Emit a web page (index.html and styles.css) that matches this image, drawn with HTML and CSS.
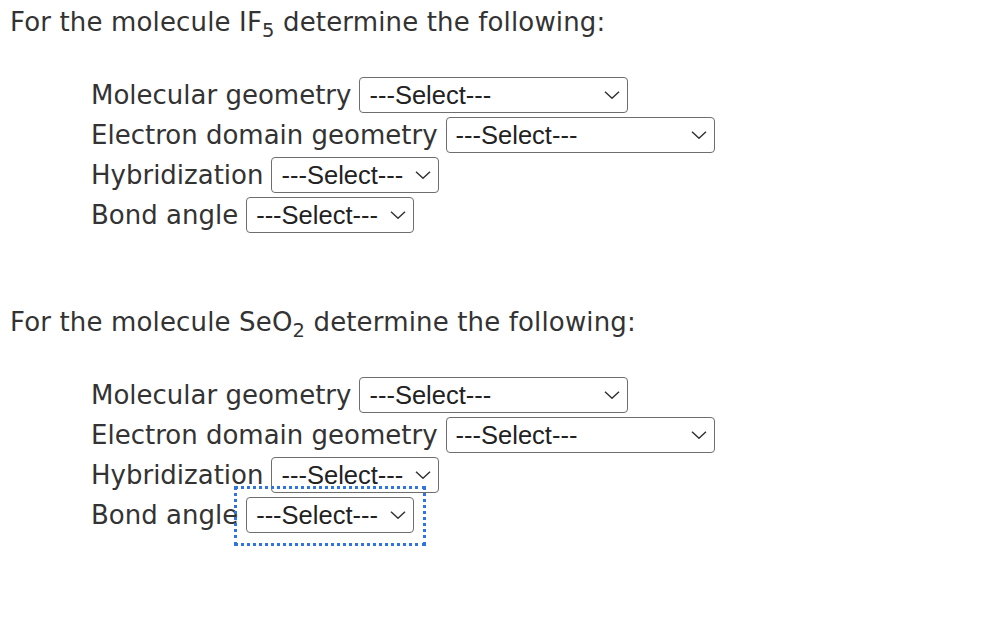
FILE: index.html
```html
<!DOCTYPE html>
<html>
<head>
<meta charset="utf-8">
<link rel="stylesheet" href="styles.css">
</head>
<body>
<section class="block">
  <p class="q">For the molecule IF<sub>5</sub> determine the following:</p>
  <div class="rows">
    <div class="row"><span class="lbl">Molecular geometry</span><span class="sel w-wide"><select><option>---Select---</option></select><svg class="chev" viewBox="0 0 16 8"><path d="M1 0.8 L8 7.2 L15 0.8"/></svg></span></div>
    <div class="row"><span class="lbl">Electron domain geometry</span><span class="sel w-wide"><select><option>---Select---</option></select><svg class="chev" viewBox="0 0 16 8"><path d="M1 0.8 L8 7.2 L15 0.8"/></svg></span></div>
    <div class="row"><span class="lbl">Hybridization</span><span class="sel w-narrow"><select><option>---Select---</option></select><svg class="chev" viewBox="0 0 16 8"><path d="M1 0.8 L8 7.2 L15 0.8"/></svg></span></div>
    <div class="row"><span class="lbl">Bond angle</span><span class="sel w-narrow"><select><option>---Select---</option></select><svg class="chev" viewBox="0 0 16 8"><path d="M1 0.8 L8 7.2 L15 0.8"/></svg></span></div>
  </div>
</section>
<section class="block second">
  <p class="q">For the molecule SeO<sub>2</sub> determine the following:</p>
  <div class="rows">
    <div class="row"><span class="lbl">Molecular geometry</span><span class="sel w-wide"><select><option>---Select---</option></select><svg class="chev" viewBox="0 0 16 8"><path d="M1 0.8 L8 7.2 L15 0.8"/></svg></span></div>
    <div class="row"><span class="lbl">Electron domain geometry</span><span class="sel w-wide"><select><option>---Select---</option></select><svg class="chev" viewBox="0 0 16 8"><path d="M1 0.8 L8 7.2 L15 0.8"/></svg></span></div>
    <div class="row"><span class="lbl">Hybridization</span><span class="sel w-narrow"><select><option>---Select---</option></select><svg class="chev" viewBox="0 0 16 8"><path d="M1 0.8 L8 7.2 L15 0.8"/></svg></span></div>
    <div class="row"><span class="lbl">Bond angle</span><span class="sel w-narrow focus"><select><option>---Select---</option></select><svg class="chev" viewBox="0 0 16 8"><path d="M1 0.8 L8 7.2 L15 0.8"/></svg></span></div>
  </div>
</section>
</body>
</html>
```
FILE: styles.css
```css
html, body {
  margin: 0;
  padding: 0;
  background: #ffffff;
}
body {
  font-family: "DejaVu Sans", Verdana, sans-serif;
  color: #333333;
  font-size: 26px;
}
.block {
  height: 300px;
  padding-left: 10px;
}
.q {
  margin: 0;
  padding-top: 4px;
  height: 36px;
  line-height: 36px;
  letter-spacing: 0.15px;
}
.q sub {
  font-size: 19.5px;
  vertical-align: -6px;
  line-height: 0;
}
.rows {
  margin-top: 37px;
  padding-left: 81px;
  display: flex;
  flex-direction: column;
  gap: 4px;
}
.row {
  display: flex;
  align-items: center;
  height: 36px;
}
.lbl {
  white-space: nowrap;
  margin-right: 8px;
}
.sel {
  position: relative;
  display: inline-flex;
  height: 36px;
}
.sel select {
  appearance: none;
  -webkit-appearance: none;
  width: 100%;
  height: 36px;
  border: 1.5px solid #6e6e6e;
  border-radius: 4px;
  background: #ffffff;
  font-family: "Liberation Sans", Arial, sans-serif;
  font-size: 25.5px;
  color: #222222;
  padding: 0 0 0 9px;
  margin: 0;
  outline: none;
}
.w-wide { width: 269px; }
.w-narrow { width: 168px; }
.chev {
  position: absolute;
  right: 8px;
  top: 14px;
  width: 16px;
  height: 8px;
  fill: none;
  stroke: #333333;
  stroke-width: 1.5;
  pointer-events: none;
}
.focus::after {
  content: "";
  position: absolute;
  left: -12px;
  right: -12px;
  top: -11px;
  bottom: -13px;
  border: 3px dotted #2f74e0;
  pointer-events: none;
}
```
